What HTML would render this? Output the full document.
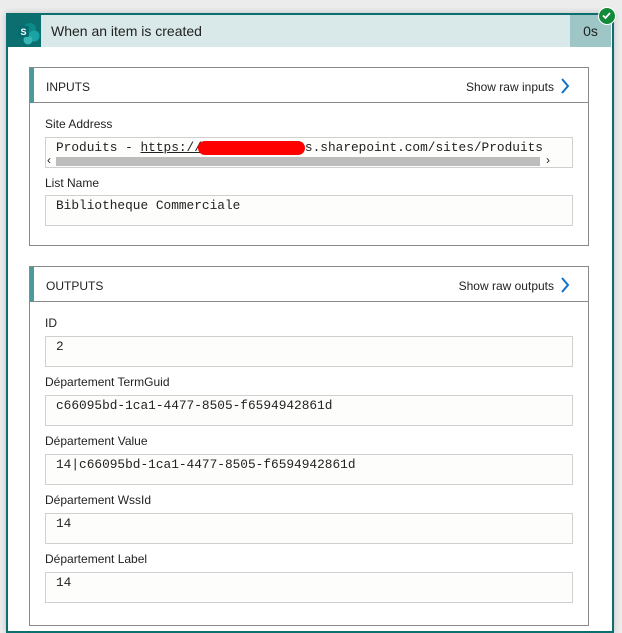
<!DOCTYPE html>
<html><head><meta charset="utf-8"><style>
*{margin:0;padding:0;box-sizing:border-box}
body{width:622px;height:608px;background:#ececec;position:relative;overflow:hidden;font-family:"Liberation Sans",sans-serif;color:#222}
.card{position:absolute;left:6px;top:13px;width:608px;height:620px;background:#fff;border:2px solid #0b6f6f;box-shadow:0 0 6px rgba(0,0,0,.2)}
.hdr{position:absolute;left:8px;top:15px;width:603px;height:32px;background:#d9e8e8}
.ico{position:absolute;left:8px;top:15px;width:33px;height:32px;background:#0b6f6f}
.title{position:absolute;left:51px;top:23px;font-size:14px;color:#222}
.dur{position:absolute;left:570px;top:15px;width:41px;height:32px;background:#9ec6c6;font-size:14px;text-align:center;line-height:32px}
.chk{position:absolute;left:598px;top:7px;width:18px;height:18px;border-radius:50%;background:#138a3a;border:1.5px solid #fff}
.box{position:absolute;left:29px;width:560px;border:1px solid #8a8a8a;background:#fff}
.bh{height:35px;border-bottom:1px solid #8a8a8a;border-left:4px solid #4a9a9a;position:relative}
.bh .t{position:absolute;left:12px;top:12px;font-size:12px}
.bh .r{position:absolute;right:34px;top:12px;font-size:12px}
.bh svg{position:absolute;right:18px;top:10px}
.lbl{position:absolute;left:45px;font-size:12px;color:#222}
.fld{position:absolute;left:45px;width:528px;height:31px;border:1px solid #d0d0d0;background:#fdfdfb;font-family:"Liberation Mono",monospace;font-size:12.8px;padding:2px 0 0 10px;white-space:nowrap;color:#222}
</style></head><body>
<div class="card"></div>
<div class="hdr"></div>
<div class="ico"><svg width="33" height="32" viewBox="0 0 33 32"><circle cx="22" cy="14" r="6" fill="#0a8a8a"/><circle cx="26" cy="21" r="5.5" fill="#1aa3a3"/><circle cx="20" cy="25" r="4.5" fill="#37b6b6"/><rect x="10" y="11" width="11" height="11" rx="1" fill="#036c70"/><text x="15.5" y="20" font-size="9" fill="#fff" text-anchor="middle" font-family="Liberation Sans" font-weight="bold">S</text></svg></div>
<div class="title">When an item is created</div>
<div class="dur">0s</div>
<div class="chk"><svg width="15" height="15" viewBox="0 0 15 15"><path d="M4 7.5l2.5 2.5 4.5-5" stroke="#fff" stroke-width="1.8" fill="none"/></svg></div>

<div class="box" style="top:67px;height:179px"><div class="bh"><span class="t">INPUTS</span><span class="r">Show raw inputs</span><svg width="10" height="16" viewBox="0 0 10 16"><path d="M2 1l6 7-6 7" stroke="#1570c8" stroke-width="2" fill="none"/></svg></div></div>
<div class="lbl" style="top:117px">Site Address</div>
<div class="fld" style="top:137px;height:31px">Produits - <span style="text-decoration:underline">https://</span><span style="display:inline-block;width:107px;height:14px;background:#f00;border-radius:8px;vertical-align:middle;margin-left:-4px"></span><span>s.sharepoint.com/sites/Produits</span>
<div style="position:absolute;left:10px;right:32px;top:19px;height:9px;background:#bdbdbd"></div>
<div style="position:absolute;left:1px;top:15px;font-size:12px;font-family:'Liberation Sans'">&#8249;</div>
<div style="position:absolute;right:22px;top:15px;font-size:12px;font-family:'Liberation Sans'">&#8250;</div></div>
<div class="lbl" style="top:176px">List Name</div>
<div class="fld" style="top:195px">Bibliotheque Commerciale</div>

<div class="box" style="top:266px;height:360px"><div class="bh"><span class="t">OUTPUTS</span><span class="r">Show raw outputs</span><svg width="10" height="16" viewBox="0 0 10 16"><path d="M2 1l6 7-6 7" stroke="#1570c8" stroke-width="2" fill="none"/></svg></div></div>
<div class="lbl" style="top:316px">ID</div>
<div class="fld" style="top:336px">2</div>
<div class="lbl" style="top:375px">Département TermGuid</div>
<div class="fld" style="top:395px">c66095bd-1ca1-4477-8505-f6594942861d</div>
<div class="lbl" style="top:434px">Département Value</div>
<div class="fld" style="top:454px">14|c66095bd-1ca1-4477-8505-f6594942861d</div>
<div class="lbl" style="top:493px">Département WssId</div>
<div class="fld" style="top:513px">14</div>
<div class="lbl" style="top:552px">Département Label</div>
<div class="fld" style="top:572px">14</div>
</body></html>
